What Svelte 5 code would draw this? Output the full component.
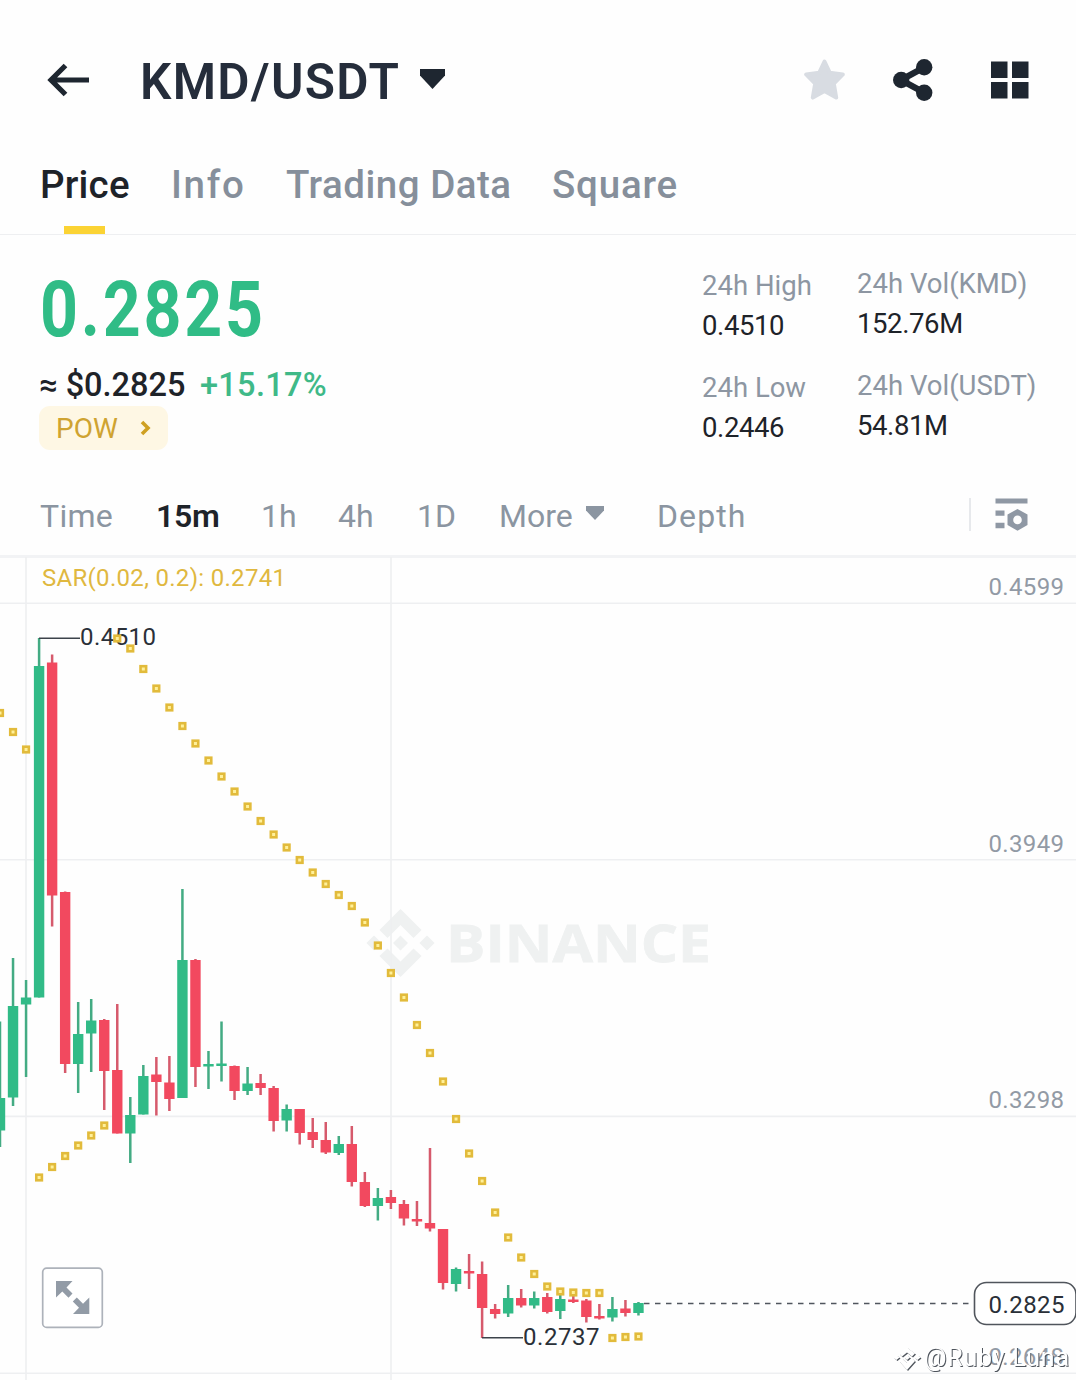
<script>
  const tabs = [
    { label: 'Price', cls: 'price' },
    { label: 'Info', cls: 'info' },
    { label: 'Trading Data', cls: 'data' },
    { label: 'Square', cls: 'square' }
  ];
  const stats = [
    [
      { label: '24h High', value: '0.4510' },
      { label: '24h Low', value: '0.2446' }
    ],
    [
      { label: '24h Vol(KMD)', value: '152.76M' },
      { label: '24h Vol(USDT)', value: '54.81M' }
    ]
  ];

  const STEP = 13.03;
  // [direction, high, body top, body bottom, low]
  const candles = [
    ['g', 1021.5, 1098, 1130.5, 1147], ['g', 958, 1006, 1097.5, 1106], ['g', 980, 997.5, 1004.5, 1077],
    ['g', 638, 666, 997.5, 997.5], ['r', 654.5, 662.5, 895.5, 926.5], ['r', 891.5, 892, 1064, 1073],
    ['g', 1002, 1034, 1064, 1093], ['g', 999, 1020.5, 1033.5, 1072], ['r', 1019, 1020, 1071, 1110],
    ['r', 1004, 1070, 1133.5, 1133.5], ['g', 1097, 1115, 1133.5, 1163], ['g', 1065, 1076, 1114.5, 1114.5],
    ['r', 1057, 1074.5, 1082, 1115.5], ['r', 1056, 1082.5, 1099, 1111], ['g', 889, 960, 1098, 1098],
    ['r', 959, 960, 1067, 1087], ['g', 1051, 1064, 1066.5, 1089], ['g', 1021.5, 1063.5, 1066, 1081.5],
    ['r', 1065.5, 1066, 1091, 1100], ['g', 1067, 1083.5, 1091, 1095], ['r', 1074, 1083, 1088, 1095],
    ['r', 1086, 1088, 1121, 1131.5], ['g', 1104.5, 1109, 1120.5, 1131.5], ['r', 1109, 1109, 1133, 1144.5],
    ['r', 1118, 1132, 1140, 1148], ['r', 1122, 1140, 1152.5, 1154], ['g', 1136, 1144, 1153, 1155],
    ['r', 1126, 1144, 1182, 1186.5], ['r', 1172, 1182, 1206, 1207], ['g', 1188, 1198, 1206, 1220.5],
    ['r', 1190, 1197, 1203, 1209], ['r', 1200, 1204, 1218.5, 1225.5], ['r', 1201, 1219, 1221.5, 1226],
    ['r', 1148, 1223, 1228.5, 1231.5], ['r', 1229, 1229, 1283, 1289.5], ['g', 1267.5, 1269, 1284, 1291.5],
    ['r', 1254, 1271, 1273.5, 1289], ['r', 1261.5, 1274, 1308, 1338], ['r', 1304, 1309, 1314, 1318.5],
    ['g', 1285, 1298, 1313.5, 1317], ['r', 1289, 1298, 1305.5, 1307.5], ['g', 1291.5, 1298, 1305.5, 1308.5],
    ['r', 1293, 1297, 1312, 1313.5], ['g', 1295, 1299, 1311, 1319], ['r', 1292, 1299.5, 1302, 1303],
    ['r', 1299, 1300.5, 1317, 1322.5], ['r', 1304, 1316, 1318.5, 1319.5], ['g', 1297, 1309, 1317.5, 1321.5],
    ['r', 1300, 1308.5, 1313, 1316.5], ['g', 1302, 1303, 1313, 1315.5]
  ];
  const sar = [
    713, 732, 749.5, 1177.5, 1167, 1156, 1145.5, 1135.5, 1125.5, 638.5, 648.5, 669, 688.5, 707.5, 726,
    743.5, 760.5, 776.5, 791.5, 806.5, 821, 834.5, 847.5, 860, 872.5, 884, 895, 906, 922.5, 945.5, 973,
    997.5, 1025, 1053, 1081.5, 1119, 1153.5, 1181, 1212.5, 1237.5, 1257.5, 1274, 1286.5, 1291.5, 1292.5,
    1293, 1293, 1338, 1337, 1336.5
  ];
  const axis = [
    { y: 595, label: '0.4599' },
    { y: 852, label: '0.3949' },
    { y: 1108, label: '0.3298' },
    { y: 1365, label: '0.2648' }
  ];
</script>

<main>
  <header>
    <svg class="back" viewBox="0 0 42 34" aria-label="Back">
      <path d="M3.5 17H42M18.5 2.5L4 17L18.5 31.5" fill="none" stroke="#1e2630" stroke-width="5.2" />
    </svg>
    <h1>KMD/USDT</h1>
    <svg class="caret" viewBox="0 0 25 20"><path d="M0 0H25V6.5L12.5 20L0 6.5Z" fill="#1e2630" /></svg>
    <div class="actions">
      <svg class="star" viewBox="0 0 41 41">
        <path d="M20.5 2.5L25.8 13.8L38.8 15.4L29.8 24.6L32.2 38.6L20.5 32L8.8 38.6L11.2 24.6L2.2 15.4L15.2 13.8Z" fill="#d8dce2" stroke="#d8dce2" stroke-width="4" stroke-linejoin="round" />
      </svg>
      <svg class="share" viewBox="0 0 40 42" fill="#1e2630">
        <path d="M31 8.5L8 21L31 33.5" fill="none" stroke="#1e2630" stroke-width="6.5" />
        <circle cx="31.2" cy="8.3" r="8.2" /><circle cx="8.2" cy="21" r="8.2" /><circle cx="31.2" cy="33.7" r="8.2" />
      </svg>
      <svg class="grid" viewBox="0 0 38 38" fill="#1e2630">
        <path d="M0 0.5H16.5V17H0ZM21 0.5H37.5V17H21ZM0 21H16.5V37.5H0ZM21 21H37.5V37.5H21Z" />
      </svg>
    </div>
  </header>

  <nav class="tabs">
    {#each tabs as tab, i}
      <div class="tab {tab.cls}" class:active={i === 0}>{tab.label}</div>
    {/each}
  </nav>

  <section class="summary">
    <div class="quote">
      <div class="last">0.2825</div>
      <div class="sub"><span class="usd">≈ $0.2825</span><span class="change">+15.17%</span></div>
      <div class="tag">
        <span>POW</span>
        <svg viewBox="0 0 11 16"><path d="M2 2L8 8L2 14" fill="none" stroke="#cfa022" stroke-width="3.6" /></svg>
      </div>
    </div>
    <div class="stats">
      {#each stats as column}
        <div class="column">
          {#each column as item}
            <div class="stat"><div class="label">{item.label}</div><div class="value">{item.value}</div></div>
          {/each}
        </div>
      {/each}
    </div>
  </section>

  <nav class="intervals">
    <span class="time">Time</span>
    <span class="m15">15m</span>
    <span class="h1">1h</span>
    <span class="h4">4h</span>
    <span class="d1">1D</span>
    <span class="more">More</span>
    <svg class="down" viewBox="0 0 18 14"><path d="M0 0H18V4.5L9 14L0 4.5Z" fill="#8b95a1" /></svg>
    <span class="depth">Depth</span>
    <i class="rule"></i>
    <svg class="settings" viewBox="0 0 33 33" fill="#8f98a4">
      <path d="M0.5 0.5H32.5V5.5H0.5ZM0.5 12.5H9.5V17.8H0.5ZM0.5 24.8H9.5V30.2H0.5Z" />
      <path fill-rule="evenodd" d="M22.5 11L32.5 16.5V27L22.5 32.7L12.5 27V16.5ZM22.5 17.6A4.3 4.3 0 1 0 22.5 26.2A4.3 4.3 0 1 0 22.5 17.6Z" />
    </svg>
  </nav>

  <svg class="chart" viewBox="0 555 1076 825">
    <g fill="#eff1f1">
      <path d="M400.5 909L421.5 930L413.5 938L400.5 925L387.5 938L379.5 930ZM400.5 977L421.5 956L413.5 948.5L400.5 961.5L387.5 948.5L379.5 956ZM400.5 935.5L408 943L400.5 950.5L393 943ZM427 935.5L434.5 943L427 950.5L419.5 943ZM374 935.5L381.5 943L374 950.5L366.5 943Z" />
      <text class="brand" x="446" y="961.5" textLength="265" lengthAdjust="spacingAndGlyphs">BINANCE</text>
    </g>
    <g stroke="#eeeff1" stroke-width="1.6">
      <path d="M0 556.5H1076" stroke="#f2f3f5" stroke-width="3" />
      <path d="M0 603.3H1076M0 859.8H1076M0 1116.4H1076M0 1373.2H1076M26 557V1380M391 557V1380" />
    </g>
    <text class="sar" x="42" y="586" textLength="244">SAR(0.02, 0.2): 0.2741</text>
    {#each axis as tick}
      <text class="tick" x="988.5" y={tick.y} textLength="75.5">{tick.label}</text>
    {/each}
    {#each candles as [dir, high, top, bottom, low], i}
      <rect class="{dir} wick" x={i * STEP - 1.25} y={high} width="2.5" height={low - high} />
      <rect class={dir} x={i * STEP - 5.2} y={top} width="10.4" height={bottom - top} />
    {/each}
    <path d="M39 638.3H80M482 1337.8H523" stroke="#3c424a" stroke-width="1.5" />
    <text class="mark" x="80" y="645" textLength="76">0.4510</text>
    <text class="mark" x="523" y="1345" textLength="76.5">0.2737</text>
    {#each sar as y, i}
      <rect class="dot" x={i * STEP - 2.8} y={y - 2.8} width="5.6" height="5.6" />
    {/each}
    <path d="M644 1303.4H970" stroke="#50565e" stroke-width="1.5" stroke-dasharray="5.5 5.5" />
    <rect x="974.5" y="1282.5" width="101.5" height="42" rx="12" fill="#fff" stroke="#50555c" stroke-width="1.6" />
    <text class="mark" x="988.5" y="1313" textLength="76">0.2825</text>
    <g>
      <rect x="42.7" y="1268.2" width="59.6" height="59.2" rx="4" fill="#fff" stroke="#adb2ba" stroke-width="1.7" />
      <path d="M56 1281H72.5L66.5 1287.5L72.5 1293.5L68.5 1297.8L62.3 1291.5L56 1297.5ZM89.3 1314H73L79 1307.7L72.8 1301.5L76.8 1297.6L83 1303.8L89.3 1297.6Z" fill="#929ba6" />
    </g>
    <g class="credit">
      <path d="M899 1353.5L907 1347.5L915 1353.5L912 1356.5L907 1352.5L902 1356.5ZM899 1361L902 1358.5L907 1363L912 1358.5L915 1361L907 1370ZM893.5 1357.5L896.5 1355L899.5 1357.5L896.5 1360ZM914.5 1357.5L917.5 1355L920.5 1357.5L917.5 1360ZM904 1357.5L907 1355L910 1357.5L907 1360Z" />
      <text x="924" y="1366" textLength="145">@Ruby Luna</text>
    </g>
  </svg>
</main>

<style>
  :global(body) { margin: 0; background: #fefefe; }
  main {
    width: 1076px; height: 1380px; overflow: hidden; background: #fefefe;
    font-family: Roboto, "Liberation Sans", sans-serif; color: #1e2329;
    display: flex; flex-direction: column;
  }
  svg { display: block; flex: none; }
  header { height: 160px; box-sizing: border-box; padding: 0 47px; display: flex; align-items: center; }
  .back { width: 42px; height: 34px; }
  h1 { margin: 4px 0 0 51px; width: 280px; font-size: 49.5px; line-height: 60px; font-weight: 600; letter-spacing: 1.3px; color: #252d3b; white-space: nowrap; }
  .caret { width: 25px; height: 20px; margin-bottom: 3px; }
  .actions { margin-left: auto; display: flex; align-items: center; }
  .star { width: 41px; height: 41px; margin-bottom: 1px; }
  .share { width: 40px; height: 42px; margin-left: 48px; }
  .grid { width: 38px; height: 38px; margin-left: 58px; }
  .tabs { height: 75px; box-sizing: border-box; border-bottom: 1.5px solid #eeeff1; padding-left: 40px; display: flex; font-size: 38.5px; font-weight: 500; line-height: 49px; color: #868f9b; }
  .tab { position: relative; white-space: nowrap; }
  .price { width: 131px; letter-spacing: 0.2px; }
  .info { width: 115px; letter-spacing: 1.7px; }
  .data { width: 266px; letter-spacing: 0.5px; }
  .square { letter-spacing: 0.8px; }
  .active { color: #1e2329; }
  .active::after { content: ''; position: absolute; left: 24px; bottom: 0; width: 41px; height: 8px; background: #fbd334; }
  .summary { height: 245px; display: flex; justify-content: space-between; }
  .quote { padding: 30px 0 0 40px; }
  .last { width: 300px; height: 90px; font-size: 77px; line-height: 90px; font-weight: 700; color: #30bc86; letter-spacing: 3.2px; transform: scaleX(.86); transform-origin: left; }
  .sub { height: 51px; display: flex; align-items: center; font-size: 32.5px; font-weight: 500; line-height: 45px; padding-top: 10px; box-sizing: border-box; margin-left: -1px; }
  .usd { width: 161px; white-space: nowrap; }
  .change { color: #3fb988; letter-spacing: 0.3px; }
  .tag { width: 129px; height: 44px; box-sizing: border-box; margin-left: -1px; padding: 0 17px; border-radius: 11px; background: #fef7e4; color: #cfa331; display: flex; align-items: center; justify-content: space-between; font-size: 28px; }
  .tag svg { width: 11px; height: 16px; }
  .stats { display: flex; width: 374px; font-size: 27.5px; line-height: 40px; padding-top: 29px; }
  .column { width: 155px; padding-top: 2px; white-space: nowrap; }
  .column + .column { padding-top: 0; width: 219px; }
  .stat { height: 102px; }
  .label { color: #8d96a2; }
  .value { color: #1e2329; letter-spacing: -0.4px; }
  .intervals { height: 75px; box-sizing: border-box; display: flex; align-items: center; padding: 0 48px 0 40px; font-size: 32px; line-height: 40px; color: #8b95a1; }
  .intervals span { margin-bottom: 4px; }
  .time { width: 116px; letter-spacing: 0.3px; }
  .m15 { width: 105px; color: #1e2329; font-weight: 600; letter-spacing: -0.3px; }
  .h1 { width: 77px; }
  .h4 { width: 79px; }
  .d1 { width: 82px; }
  .more { width: 87px; }
  .down { width: 18px; height: 14px; margin-bottom: 9px; }
  .depth { margin-left: 53px; letter-spacing: 1.1px; }
  .rule { width: 2px; height: 33px; margin: 0 24px 6px auto; background: #e7e9ec; }
  .settings { width: 33px; height: 33px; margin-bottom: 6px; }
  .chart { width: 1076px; height: 825px; font-size: 24px; }
  .brand { font: 700 52.5px "Open Sans", sans-serif; stroke: #eff1f1; stroke-width: 0.8; }
  .sar { fill: #e0b83f; }
  .tick { fill: #929aa5; }
  .mark { fill: #2a3038; }
  .g { fill: #31bb87; }
  .r { fill: #f2495f; }
  .g.wick { fill: #43ab83; }
  .r.wick { fill: #d65a6c; }
  .dot { fill: #fff09a; stroke: #e2bb3b; stroke-width: 2.6; }
  .credit { fill: #fff; font-size: 25px; filter: drop-shadow(1px 1px 0.4px #4f555d); }
</style>
